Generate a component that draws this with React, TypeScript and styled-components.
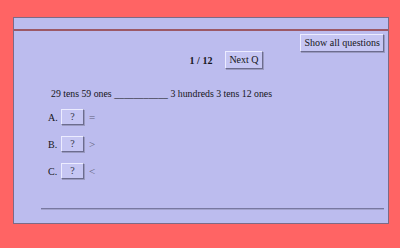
import React from "react";
import styled, { createGlobalStyle } from "styled-components";

const GlobalStyle = createGlobalStyle`
  html, body {
    margin: 0;
    padding: 0;
    background: #ff6464;
  }
  body {
    font-family: "Liberation Serif", "Times New Roman", serif;
    font-size: 10px;
    color: #151520;
  }
`;

const Page = styled.div`
  width: 400px;
  height: 248px;
  padding-top: 17px;
  box-sizing: border-box;
`;

const Panel = styled.div`
  margin-left: 13px;
  width: 376px;
  height: 207px;
  box-sizing: border-box;
  background: #bcbcee;
  border: 1px solid #7c6a86;
  display: flex;
  flex-direction: column;
`;

const TopBar = styled.div`
  height: 11px;
  border-bottom: 2px solid #9c5866;
`;

const Body = styled.div`
  flex: 1;
  padding: 3px 4px 0 27px;
  display: flex;
  flex-direction: column;
`;

const Button = styled.button`
  font-family: "Liberation Serif", "Times New Roman", serif;
  font-size: 10px;
  color: #151520;
  background: #c6c6f3;
  border: 1px solid;
  border-color: #ececff #6c6c8e #6c6c8e #ececff;
  box-shadow: 1px 1px 0 #9a9ac0;
  padding: 0 3px;
  height: 18px;
  line-height: 16px;
  cursor: pointer;
`;

const TopActions = styled.div`
  display: flex;
  justify-content: flex-end;
`;

const NavRow = styled.div`
  display: grid;
  grid-template-columns: 1fr auto 1fr;
  align-items: center;
  margin-top: -1px;
  margin-left: -27px;
  margin-right: -4px;
`;

const Counter = styled.span`
  font-weight: bold;
  grid-column: 2;
`;

const NextButton = styled(Button)`
  justify-self: start;
  margin-left: 13px;
`;

const Question = styled.p`
  margin: 19px 0 0 10px;
  font-size: 9.8px;
  line-height: 12px;
`;

const Options = styled.div`
  display: flex;
  flex-direction: column;
  gap: 11px;
  margin-top: 9px;
  margin-left: 7px;
`;

const Option = styled.div`
  display: flex;
  align-items: center;
  height: 16px;
`;

const Letter = styled.span`
  width: 13px;
`;

const AnswerButton = styled(Button)`
  width: 23px;
  height: 16px;
  line-height: 14px;
  padding: 0;
  color: #333346;
`;

const Symbol = styled.span`
  margin-left: 5px;
  font-size: 11px;
  color: #5e5e78;
`;

const Rule = styled.div`
  margin-top: auto;
  margin-bottom: 13px;
  height: 1px;
  background: #7878a0;
  border-bottom: 1px solid #a2a2cc;
`;

const options = [
  { letter: "A.", symbol: "=" },
  { letter: "B.", symbol: ">" },
  { letter: "C.", symbol: "<" },
];

export default function App() {
  return (
    <Page>
      <GlobalStyle />
      <Panel>
        <TopBar />
        <Body>
          <TopActions>
            <Button>Show all questions</Button>
          </TopActions>
          <NavRow>
            <Counter>1 / 12</Counter>
            <NextButton>Next Q</NextButton>
          </NavRow>
          <Question>29 tens 59 ones ___________ 3 hundreds 3 tens 12 ones</Question>
          <Options>
            {options.map((o) => (
              <Option key={o.letter}>
                <Letter>{o.letter}</Letter>
                <AnswerButton>?</AnswerButton>
                <Symbol>{o.symbol}</Symbol>
              </Option>
            ))}
          </Options>
          <Rule />
        </Body>
      </Panel>
    </Page>
  );
}
